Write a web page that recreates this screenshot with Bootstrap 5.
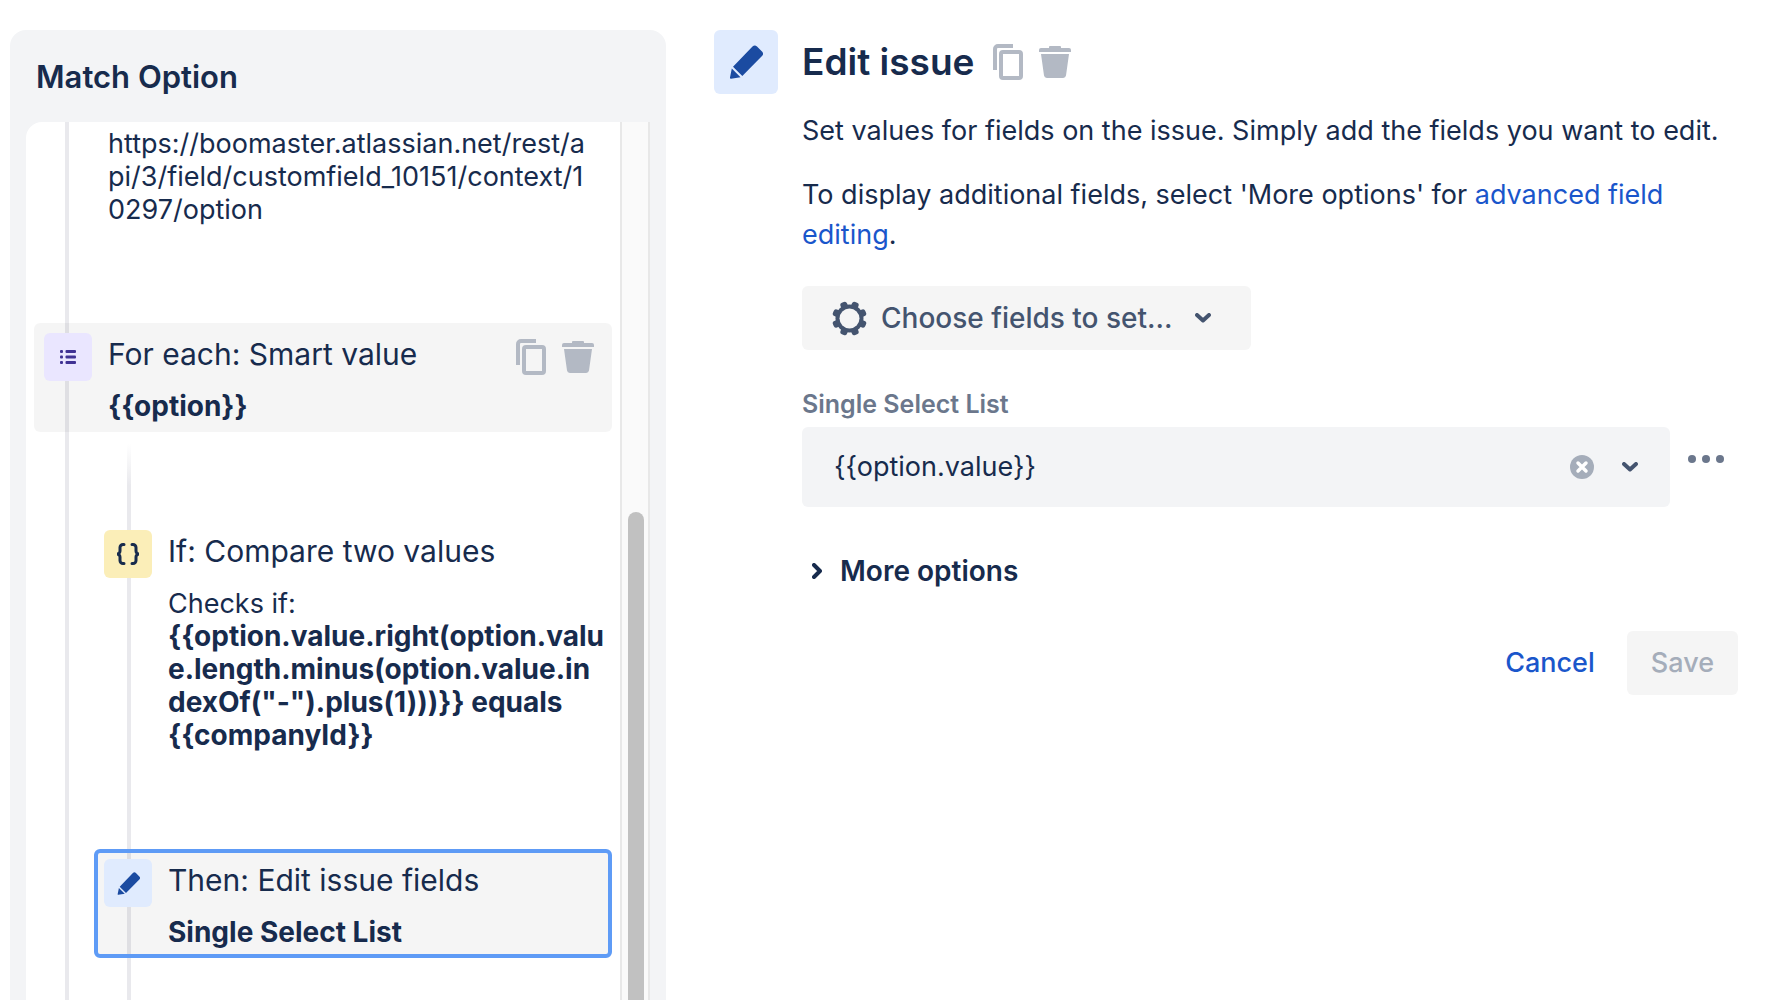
<!DOCTYPE html>
<html lang="en">
<head>
<meta charset="utf-8">
<meta name="viewport" content="width=device-width, initial-scale=1">
<title>Match Option</title>
<link href="https://cdn.jsdelivr.net/npm/bootstrap@5.3.0/dist/css/bootstrap.min.css" rel="stylesheet">
<style>
  :root { --ink: #172b4d; --slate: #44546f; --icon: #b3b9c4; --link: #1a56cb; --rail: #e9e9ed; }
  body { font-family: Inter, "Liberation Sans", sans-serif; font-size: 27px; line-height: 40px; color: var(--ink); }
  svg { display: block; flex: none; }
  .app { height: 100vh; padding: 30px 38px 0 10px; gap: 48px; overflow: hidden; }
  .rule-panel { flex: 0 0 656px; background: #f3f4f6; border-radius: 16px 16px 0 0; padding: 0 16px; }
  .rule-title { font-size: 31px; line-height: 36px; font-weight: 600; padding: 29px 10px 27px; }
  .rule-scroll { background: #fff; border-radius: 16px 0 0 0; overflow: hidden; }
  .steps { padding: 0 8px; background: linear-gradient(var(--rail), var(--rail)) no-repeat 39px 0 / 4px 100%; }
  .steps-branch { margin-left: 60px; padding-top: 88px; background: linear-gradient(transparent 12px, var(--rail) 54px) no-repeat 33px 0 / 4px 100%; }
  .step { border: 4px solid transparent; border-radius: 6px; padding: 6px 3px 5px 6px; gap: 16px; line-height: 33px; overflow-wrap: anywhere; }
  .step-gap { margin-bottom: 88px; }
  .step-shaded { background-color: rgba(9, 9, 9, .04); }
  .step-active { border-color: #5e9bf6; }
  .step-name { font-size: 30px; line-height: 38px; font-weight: 400; margin: 2px 0 17px; }
  .step-value { font-size: 28px; font-weight: 700; }
  .step-url { padding: 1px 16px 5px 70px; word-break: break-all; }
  .tile { width: 48px; height: 48px; border-radius: 6px; }
  .tile-lg { width: 64px; height: 64px; }
  .tile-blue { background: #e0ebfe; color: #1b4ba1; }
  .tile-violet { background: #eae6ff; color: #403294; }
  .tile-yellow { background: #fbeeb8; }
  .tools { gap: 16px; color: var(--icon); }
  .step .tools { padding: 6px 11px 0 0; }
  .plain-btn { border: 0; background: none; padding: 0; color: inherit; }
  .track { width: 30px; background: #fafafa; border: solid #e8e8e8; border-width: 0 2px; padding: 390px 4px 0 6px; }
  .thumb { background: #c1c1c1; border-radius: 8px 8px 0 0; }
  .page-head { margin-bottom: 17px; }
  .page-title { font-size: 37px; line-height: 64px; font-weight: 600; margin: 0 19px 0 0; }
  .intro { margin-bottom: 24px; }
  a { color: var(--link); text-decoration: none; }
  .act { font-size: 27px; line-height: 40px; font-weight: 500; padding: 12px 24px; border: 0; border-radius: 6px; }
  .act-grey, .act-grey:disabled { background: #f5f5f5; color: var(--slate); opacity: 1; }
  .act-grey:disabled { color: #a5adba; }
  .act-link { color: var(--link); }
  .choose { gap: 14px; padding: 12px 40px 12px 30px; margin-top: 31px; font-size: 28px; }
  .choose svg:last-child { margin-left: 9px; }
  .field-label { font-size: 25px; line-height: 34px; font-weight: 600; color: #6b778c; margin: 37px 0 6px; }
  .field-select { height: 80px; padding: 0 120px 0 32px; border: 0; border-radius: 6px; background: #f3f4f6; font-size: 27px; line-height: 40px; color: var(--ink); }
  .field-tools { top: 0; right: 32px; height: 80px; gap: 28px; color: var(--slate); pointer-events: none; }
  .field-tools button { pointer-events: auto; }
  .dots-btn { width: 64px; height: 64px; color: #6b778c; }
  .more { gap: 18px; margin: 44px 0 40px; padding-left: 10px; font-size: 28px; font-weight: 600; }
</style>
</head>
<body>
<svg width="0" height="0" class="position-absolute" aria-hidden="true">
  <symbol id="i-copy" viewBox="0 0 30 36"><path d="M2 26V5a3 3 0 0 1 3-3h15" fill="none" stroke="currentColor" stroke-width="4"/><rect x="8" y="8" width="20" height="26" rx="2" fill="none" stroke="currentColor" stroke-width="4"/></symbol>
  <symbol id="i-trash" viewBox="0 0 32 32"><path fill="currentColor" d="M10 2V1a1 1 0 0 1 1-1h10a1 1 0 0 1 1 1v1h8a2 2 0 0 1 2 2v2H0V4a2 2 0 0 1 2-2zM2 8h28l-3 21.500a3 3 0 0 1-3 2.500H8a3 3 0 0 1-3-2.500z"/></symbol>
  <symbol id="i-pencil" viewBox="0 0 34 34"><path fill="currentColor" d="M23.500 1.600a3.200 3.200 0 0 1 4.500 0l5 5a3.200 3.200 0 0 1 0 4.500L13.300 31 4 21.700zM2.800 23.500l8.700 8.700-9.500 1.600a1 1 0 0 1-1-1.200z"/></symbol>
  <symbol id="i-down" viewBox="0 0 16 10"><path d="M2 2l6 5.500L14 2" fill="none" stroke="currentColor" stroke-width="4" stroke-linecap="round" stroke-linejoin="round"/></symbol>
</svg>

<div class="app d-flex">
  <aside class="rule-panel d-flex flex-column">
    <h2 class="rule-title m-0">Match Option</h2>
    <div class="rule-scroll d-flex flex-grow-1">
      <div class="steps flex-grow-1 d-flex flex-column">
        <div class="step step-url step-gap">https://boomaster.atlassian.net/rest/api/3/field/customfield_10151/context/10297/option</div>

        <div class="step step-shaded d-flex align-items-start">
          <span class="tile tile-violet d-flex align-items-center justify-content-center flex-shrink-0">
            <svg width="16" height="14" viewBox="0 0 16 14" fill="currentColor" aria-hidden="true"><rect width="3" height="3" rx="1"/><rect y="5.500" width="3" height="3" rx="1"/><rect y="11" width="3" height="3" rx="1"/><rect x="5.500" width="10.500" height="3" rx="1"/><rect x="5.500" y="5.500" width="10.500" height="3" rx="1"/><rect x="5.500" y="11" width="10.500" height="3" rx="1"/></svg>
          </span>
          <div class="flex-grow-1">
            <h3 class="step-name">For each: Smart value</h3>
            <div class="step-value">{{option}}</div>
          </div>
          <div class="tools d-flex align-items-center">
            <button type="button" class="plain-btn" aria-label="Duplicate step"><svg width="30" height="36"><use href="#i-copy"/></svg></button>
            <button type="button" class="plain-btn" aria-label="Delete step"><svg width="32" height="32"><use href="#i-trash"/></svg></button>
          </div>
        </div>

        <div class="steps-branch flex-grow-1">
          <div class="step step-gap d-flex align-items-start">
            <span class="tile tile-yellow d-flex align-items-center justify-content-center flex-shrink-0">
              <svg width="26" height="22" viewBox="0 0 26 22" fill="none" stroke="currentColor" stroke-width="3" stroke-linecap="round" aria-hidden="true"><path d="M9 1.500H8a3 3 0 0 0-3 3V8a3 3 0 0 1-3 3 3 3 0 0 1 3 3v3.500a3 3 0 0 0 3 3h1M17 1.500h1a3 3 0 0 1 3 3V8a3 3 0 0 0 3 3 3 3 0 0 0-3 3v3.500a3 3 0 0 1-3 3h-1"/></svg>
            </span>
            <div>
              <h3 class="step-name">If: Compare two values</h3>
              <div>Checks if:</div>
              <div class="step-value">{{option.value.right(option.value.length.minus(option.value.indexOf("-").plus(1)))}} equals {{companyId}}</div>
            </div>
          </div>

          <div class="step step-shaded step-active d-flex align-items-start">
            <span class="tile tile-blue d-flex align-items-center justify-content-center flex-shrink-0"><svg width="23" height="23" aria-hidden="true"><use href="#i-pencil"/></svg></span>
            <div>
              <h3 class="step-name">Then: Edit issue fields</h3>
              <div class="step-value">Single Select List</div>
            </div>
          </div>
        </div>
      </div>
      <div class="track d-flex flex-column flex-shrink-0"><div class="thumb flex-grow-1"></div></div>
    </div>
  </aside>

  <main class="d-flex flex-grow-1 gap-4 align-items-start">
    <span class="tile tile-lg tile-blue d-flex align-items-center justify-content-center flex-shrink-0"><svg width="34" height="34" aria-hidden="true"><use href="#i-pencil"/></svg></span>
    <form class="flex-grow-1">
      <div class="page-head d-flex align-items-center">
        <h1 class="page-title">Edit issue</h1>
        <div class="tools d-flex align-items-center">
          <button type="button" class="plain-btn" aria-label="Duplicate"><svg width="30" height="36"><use href="#i-copy"/></svg></button>
          <button type="button" class="plain-btn" aria-label="Delete"><svg width="32" height="32"><use href="#i-trash"/></svg></button>
        </div>
      </div>
      <p class="intro">Set values for fields on the issue. Simply add the fields you want to edit.</p>
      <p class="intro">To display additional fields, select 'More options' for <a href="#">advanced field editing</a>.</p>

      <button type="button" class="btn act act-grey choose d-flex align-items-center">
        <svg width="35" height="35" viewBox="-17.500 -17.500 35 35" aria-hidden="true"><g fill="currentColor"><rect x="-3.500" y="-17.500" width="7" height="35" rx="2.500" transform="rotate(22.500)"/><rect x="-3.500" y="-17.500" width="7" height="35" rx="2.500" transform="rotate(67.500)"/><rect x="-3.500" y="-17.500" width="7" height="35" rx="2.500" transform="rotate(112.500)"/><rect x="-3.500" y="-17.500" width="7" height="35" rx="2.500" transform="rotate(157.500)"/><circle r="14"/></g><circle r="10" fill="#f5f5f5"/></svg>
        <span>Choose fields to set...</span>
        <svg width="16" height="10" aria-hidden="true"><use href="#i-down"/></svg>
      </button>

      <label for="ssl" class="field-label d-block">Single Select List</label>
      <div class="d-flex align-items-start gap-1">
        <div class="position-relative flex-grow-1">
          <select id="ssl" class="field-select form-select"><option selected>{{option.value}}</option></select>
          <div class="field-tools position-absolute d-flex align-items-center">
            <button type="button" class="plain-btn" aria-label="Clear"><svg width="24" height="24" viewBox="0 0 24 24"><circle cx="12" cy="12" r="12" fill="#a5adba"/><path d="M8 8l8 8M16 8l-8 8" stroke="#fff" stroke-width="3.500" stroke-linecap="round"/></svg></button>
            <svg width="16" height="10" aria-hidden="true"><use href="#i-down"/></svg>
          </div>
        </div>
        <button type="button" class="plain-btn dots-btn d-flex align-items-center justify-content-center" aria-label="Field options"><svg width="36" height="8" viewBox="0 0 36 8" fill="currentColor"><circle cx="4" cy="4" r="4"/><circle cx="18" cy="4" r="4"/><circle cx="32" cy="4" r="4"/></svg></button>
      </div>

      <button type="button" class="plain-btn more d-flex align-items-center" aria-expanded="false">
        <svg width="10" height="16" viewBox="0 0 10 16" aria-hidden="true"><path d="M2 2l6 6-6 6" fill="none" stroke="currentColor" stroke-width="4" stroke-linecap="round" stroke-linejoin="round"/></svg>
        <span>More options</span>
      </button>

      <div class="d-flex justify-content-end gap-2">
        <button type="button" class="btn act act-link">Cancel</button>
        <button type="submit" class="btn act act-grey" disabled>Save</button>
      </div>
    </form>
  </main>
</div>
<script src="https://cdn.jsdelivr.net/npm/bootstrap@5.3.0/dist/js/bootstrap.bundle.min.js"></script>
</body>
</html>
